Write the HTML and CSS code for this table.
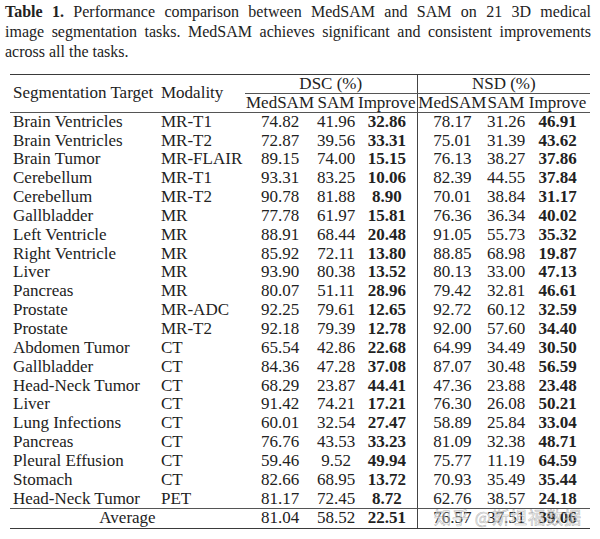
FILE: index.html
```html
<!DOCTYPE html>
<html>
<head>
<meta charset="utf-8">
<link rel="stylesheet" href="styles.css">
</head>
<body>
<div class="page">
  <div class="caption">
    <div class="cap-line"><b>Table 1.</b> Performance comparison between MedSAM and SAM on 21 3D medical</div>
    <div class="cap-line">image segmentation tasks. MedSAM achieves significant and consistent improvements</div>
    <div class="cap-last">across all the tasks.</div>
  </div>
  <table class="results">
    <colgroup>
      <col class="c1"><col class="c2"><col class="c3"><col class="c4"><col class="c5"><col class="c6"><col class="c7"><col class="c8">
    </colgroup>
    <thead>
      <tr class="h1">
        <th class="lft" rowspan="2">Segmentation Target</th>
        <th class="lft" rowspan="2">Modality</th>
        <th class="grp" colspan="3">DSC (%)</th>
        <th class="grp vl" colspan="3">NSD (%)</th>
      </tr>
      <tr class="h2">
        <th>MedSAM</th><th>SAM</th><th>Improve</th>
        <th class="vl">MedSAM</th><th>SAM</th><th>Improve</th>
      </tr>
    </thead>
    <tbody>
      <tr><td class="lft">Brain Ventricles</td><td class="lft">MR-T1</td><td>74.82</td><td>41.96</td><td class="b">32.86</td><td class="vl">78.17</td><td>31.26</td><td class="b">46.91</td></tr>
      <tr><td class="lft">Brain Ventricles</td><td class="lft">MR-T2</td><td>72.87</td><td>39.56</td><td class="b">33.31</td><td class="vl">75.01</td><td>31.39</td><td class="b">43.62</td></tr>
      <tr><td class="lft">Brain Tumor</td><td class="lft">MR-FLAIR</td><td>89.15</td><td>74.00</td><td class="b">15.15</td><td class="vl">76.13</td><td>38.27</td><td class="b">37.86</td></tr>
      <tr><td class="lft">Cerebellum</td><td class="lft">MR-T1</td><td>93.31</td><td>83.25</td><td class="b">10.06</td><td class="vl">82.39</td><td>44.55</td><td class="b">37.84</td></tr>
      <tr><td class="lft">Cerebellum</td><td class="lft">MR-T2</td><td>90.78</td><td>81.88</td><td class="b">8.90</td><td class="vl">70.01</td><td>38.84</td><td class="b">31.17</td></tr>
      <tr><td class="lft">Gallbladder</td><td class="lft">MR</td><td>77.78</td><td>61.97</td><td class="b">15.81</td><td class="vl">76.36</td><td>36.34</td><td class="b">40.02</td></tr>
      <tr><td class="lft">Left Ventricle</td><td class="lft">MR</td><td>88.91</td><td>68.44</td><td class="b">20.48</td><td class="vl">91.05</td><td>55.73</td><td class="b">35.32</td></tr>
      <tr><td class="lft">Right Ventricle</td><td class="lft">MR</td><td>85.92</td><td>72.11</td><td class="b">13.80</td><td class="vl">88.85</td><td>68.98</td><td class="b">19.87</td></tr>
      <tr><td class="lft">Liver</td><td class="lft">MR</td><td>93.90</td><td>80.38</td><td class="b">13.52</td><td class="vl">80.13</td><td>33.00</td><td class="b">47.13</td></tr>
      <tr><td class="lft">Pancreas</td><td class="lft">MR</td><td>80.07</td><td>51.11</td><td class="b">28.96</td><td class="vl">79.42</td><td>32.81</td><td class="b">46.61</td></tr>
      <tr><td class="lft">Prostate</td><td class="lft">MR-ADC</td><td>92.25</td><td>79.61</td><td class="b">12.65</td><td class="vl">92.72</td><td>60.12</td><td class="b">32.59</td></tr>
      <tr><td class="lft">Prostate</td><td class="lft">MR-T2</td><td>92.18</td><td>79.39</td><td class="b">12.78</td><td class="vl">92.00</td><td>57.60</td><td class="b">34.40</td></tr>
      <tr><td class="lft">Abdomen Tumor</td><td class="lft">CT</td><td>65.54</td><td>42.86</td><td class="b">22.68</td><td class="vl">64.99</td><td>34.49</td><td class="b">30.50</td></tr>
      <tr><td class="lft">Gallbladder</td><td class="lft">CT</td><td>84.36</td><td>47.28</td><td class="b">37.08</td><td class="vl">87.07</td><td>30.48</td><td class="b">56.59</td></tr>
      <tr><td class="lft">Head-Neck Tumor</td><td class="lft">CT</td><td>68.29</td><td>23.87</td><td class="b">44.41</td><td class="vl">47.36</td><td>23.88</td><td class="b">23.48</td></tr>
      <tr><td class="lft">Liver</td><td class="lft">CT</td><td>91.42</td><td>74.21</td><td class="b">17.21</td><td class="vl">76.30</td><td>26.08</td><td class="b">50.21</td></tr>
      <tr><td class="lft">Lung Infections</td><td class="lft">CT</td><td>60.01</td><td>32.54</td><td class="b">27.47</td><td class="vl">58.89</td><td>25.84</td><td class="b">33.04</td></tr>
      <tr><td class="lft">Pancreas</td><td class="lft">CT</td><td>76.76</td><td>43.53</td><td class="b">33.23</td><td class="vl">81.09</td><td>32.38</td><td class="b">48.71</td></tr>
      <tr><td class="lft">Pleural Effusion</td><td class="lft">CT</td><td>59.46</td><td>9.52</td><td class="b">49.94</td><td class="vl">75.77</td><td>11.19</td><td class="b">64.59</td></tr>
      <tr><td class="lft">Stomach</td><td class="lft">CT</td><td>82.66</td><td>68.95</td><td class="b">13.72</td><td class="vl">70.93</td><td>35.49</td><td class="b">35.44</td></tr>
      <tr class="last"><td class="lft">Head-Neck Tumor</td><td class="lft">PET</td><td>81.17</td><td>72.45</td><td class="b">8.72</td><td class="vl">62.76</td><td>38.57</td><td class="b">24.18</td></tr>
    </tbody>
    <tfoot>
      <tr class="avg"><td colspan="2">Average</td><td>81.04</td><td>58.52</td><td class="b">22.51</td><td class="vl">76.57</td><td>37.51</td><td class="b">39.06</td></tr>
    </tfoot>
  </table>
  <div class="watermark">知乎 @斯坦福数据</div>
</div>
</body>
</html>
```

FILE: styles.css
```css
html, body {
  margin: 0;
  padding: 0;
  background: #ffffff;
}
body {
  font-family: "Liberation Serif", "DejaVu Serif", serif;
  color: #222222;
}
.page {
  position: relative;
  width: 600px;
  height: 539px;
  padding: 2px 10px 0 5px;
  box-sizing: border-box;
}
.caption {
  font-size: 16px;
  line-height: 20px;
  width: 586px;
}
.cap-line {
  text-align: justify;
  text-align-last: justify;
  white-space: nowrap;
}
.cap-last {
  text-align: left;
}
.results {
  margin: 12px 0 0 5px;
  width: 580px;
  border-collapse: collapse;
  table-layout: fixed;
  font-size: 17px;
}
.c1 { width: 148px; }
.c2 { width: 87px; }
.c3 { width: 70px; }
.c4 { width: 42px; }
.c5 { width: 60px; }
.c6 { width: 70px; }
.c7 { width: 38px; }
.c8 { width: 65px; }
.results th, .results td {
  padding: 0;
  height: 18.85px;
  line-height: 18.85px;
  text-align: center;
  font-weight: normal;
  white-space: nowrap;
}
.results thead th {
  height: 17.85px;
  line-height: 17.85px;
}
.results .lft {
  text-align: left;
  padding-left: 3px;
}
.results thead tr.h1 th {
  border-top: 1.5px solid #3a3a3a;
}
.results th.grp {
  border-bottom: 1px solid #555555;
}
.results thead tr.h2 th {
  border-bottom: 1px solid #555555;
}
.results thead th.lft {
  border-bottom: 1px solid #555555;
}
.results .vl {
  border-left: 1px solid #444444;
}
.results .b {
  font-weight: bold;
}
.results tr.last td {
  border-bottom: 1px solid #555555;
}
.results tr.avg td {
  border-bottom: 1.5px solid #3a3a3a;
}
.watermark {
  position: absolute;
  left: 434px;
  top: 507px;
  font-family: "Noto Sans CJK SC", sans-serif;
  font-size: 17px;
  line-height: 20px;
  color: rgba(255, 255, 255, 0.55);
  -webkit-text-stroke: 0.6px rgba(110, 110, 110, 0.5);
  letter-spacing: 1px;
}
```
